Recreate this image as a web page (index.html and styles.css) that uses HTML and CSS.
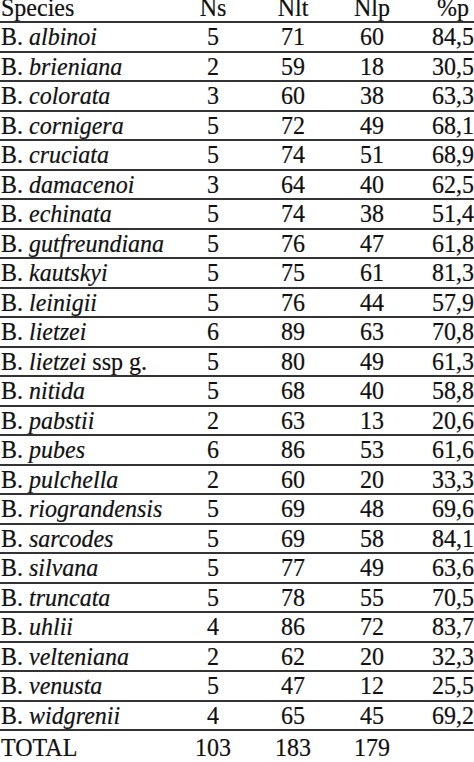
FILE: index.html
```html
<!DOCTYPE html>
<html>
<head>
<meta charset="utf-8">
<link rel="stylesheet" href="styles.css">
</head>
<body>
<div class="table">
  <div class="row head"><span class="sp">Species</span><span>Ns</span><span>Nlt</span><span>Nlp</span><span class="pc">%p</span></div>
  <div class="row"><span class="sp">B. <i>albinoi</i></span><span>5</span><span>71</span><span>60</span><span>84,5</span></div>
  <div class="row"><span class="sp">B. <i>brieniana</i></span><span>2</span><span>59</span><span>18</span><span>30,5</span></div>
  <div class="row"><span class="sp">B. <i>colorata</i></span><span>3</span><span>60</span><span>38</span><span>63,3</span></div>
  <div class="row"><span class="sp">B. <i>cornigera</i></span><span>5</span><span>72</span><span>49</span><span>68,1</span></div>
  <div class="row"><span class="sp">B. <i>cruciata</i></span><span>5</span><span>74</span><span>51</span><span>68,9</span></div>
  <div class="row"><span class="sp">B. <i>damacenoi</i></span><span>3</span><span>64</span><span>40</span><span>62,5</span></div>
  <div class="row"><span class="sp">B. <i>echinata</i></span><span>5</span><span>74</span><span>38</span><span>51,4</span></div>
  <div class="row"><span class="sp">B. <i>gutfreundiana</i></span><span>5</span><span>76</span><span>47</span><span>61,8</span></div>
  <div class="row"><span class="sp">B. <i>kautskyi</i></span><span>5</span><span>75</span><span>61</span><span>81,3</span></div>
  <div class="row"><span class="sp">B. <i>leinigii</i></span><span>5</span><span>76</span><span>44</span><span>57,9</span></div>
  <div class="row"><span class="sp">B. <i>lietzei</i></span><span>6</span><span>89</span><span>63</span><span>70,8</span></div>
  <div class="row"><span class="sp">B. <i>lietzei</i> ssp g.</span><span>5</span><span>80</span><span>49</span><span>61,3</span></div>
  <div class="row"><span class="sp">B. <i>nitida</i></span><span>5</span><span>68</span><span>40</span><span>58,8</span></div>
  <div class="row"><span class="sp">B. <i>pabstii</i></span><span>2</span><span>63</span><span>13</span><span>20,6</span></div>
  <div class="row"><span class="sp">B. <i>pubes</i></span><span>6</span><span>86</span><span>53</span><span>61,6</span></div>
  <div class="row"><span class="sp">B. <i>pulchella</i></span><span>2</span><span>60</span><span>20</span><span>33,3</span></div>
  <div class="row"><span class="sp">B. <i>riograndensis</i></span><span>5</span><span>69</span><span>48</span><span>69,6</span></div>
  <div class="row"><span class="sp">B. <i>sarcodes</i></span><span>5</span><span>69</span><span>58</span><span>84,1</span></div>
  <div class="row"><span class="sp">B. <i>silvana</i></span><span>5</span><span>77</span><span>49</span><span>63,6</span></div>
  <div class="row"><span class="sp">B. <i>truncata</i></span><span>5</span><span>78</span><span>55</span><span>70,5</span></div>
  <div class="row"><span class="sp">B. <i>uhlii</i></span><span>4</span><span>86</span><span>72</span><span>83,7</span></div>
  <div class="row"><span class="sp">B. <i>velteniana</i></span><span>2</span><span>62</span><span>20</span><span>32,3</span></div>
  <div class="row"><span class="sp">B. <i>venusta</i></span><span>5</span><span>47</span><span>12</span><span>25,5</span></div>
  <div class="row"><span class="sp">B. <i>widgrenii</i></span><span>4</span><span>65</span><span>45</span><span>69,2</span></div>
  <div class="row last"><span class="sp">TOTAL</span><span>103</span><span>183</span><span>179</span><span></span></div>
</div>
</body>
</html>
```
FILE: styles.css
```css
html, body {
  margin: 0;
  padding: 0;
  background: #fff;
  overflow: hidden;
}
body {
  width: 474px;
  height: 762px;
  font-family: "Liberation Serif", "Times New Roman", serif;
  font-size: 24px;
  color: #111;
}
.table {
  margin-top: -6.5px;
  width: 474px;
}
.row {
  display: grid;
  grid-template-columns: 174px 78px 82px 76px 64px;
  height: 27.5px;
  line-height: 29.5px;
  border-bottom: 2px solid #333;
  white-space: nowrap;
}
.row.head {
  line-height: 28px;
}
.row.last {
  border-bottom: none;
  padding-top: 3px;
}
.row span {
  text-align: center;
  transform: scaleY(1.05);
  -webkit-text-stroke: 0.2px #111;
}
.row span:last-child {
  text-align: right;
}
.row span.pc {
  padding-right: 5px;
}
.row span.sp {
  text-align: left;
  padding-left: 1px;
}
.row i {
  font-style: italic;
}
```
